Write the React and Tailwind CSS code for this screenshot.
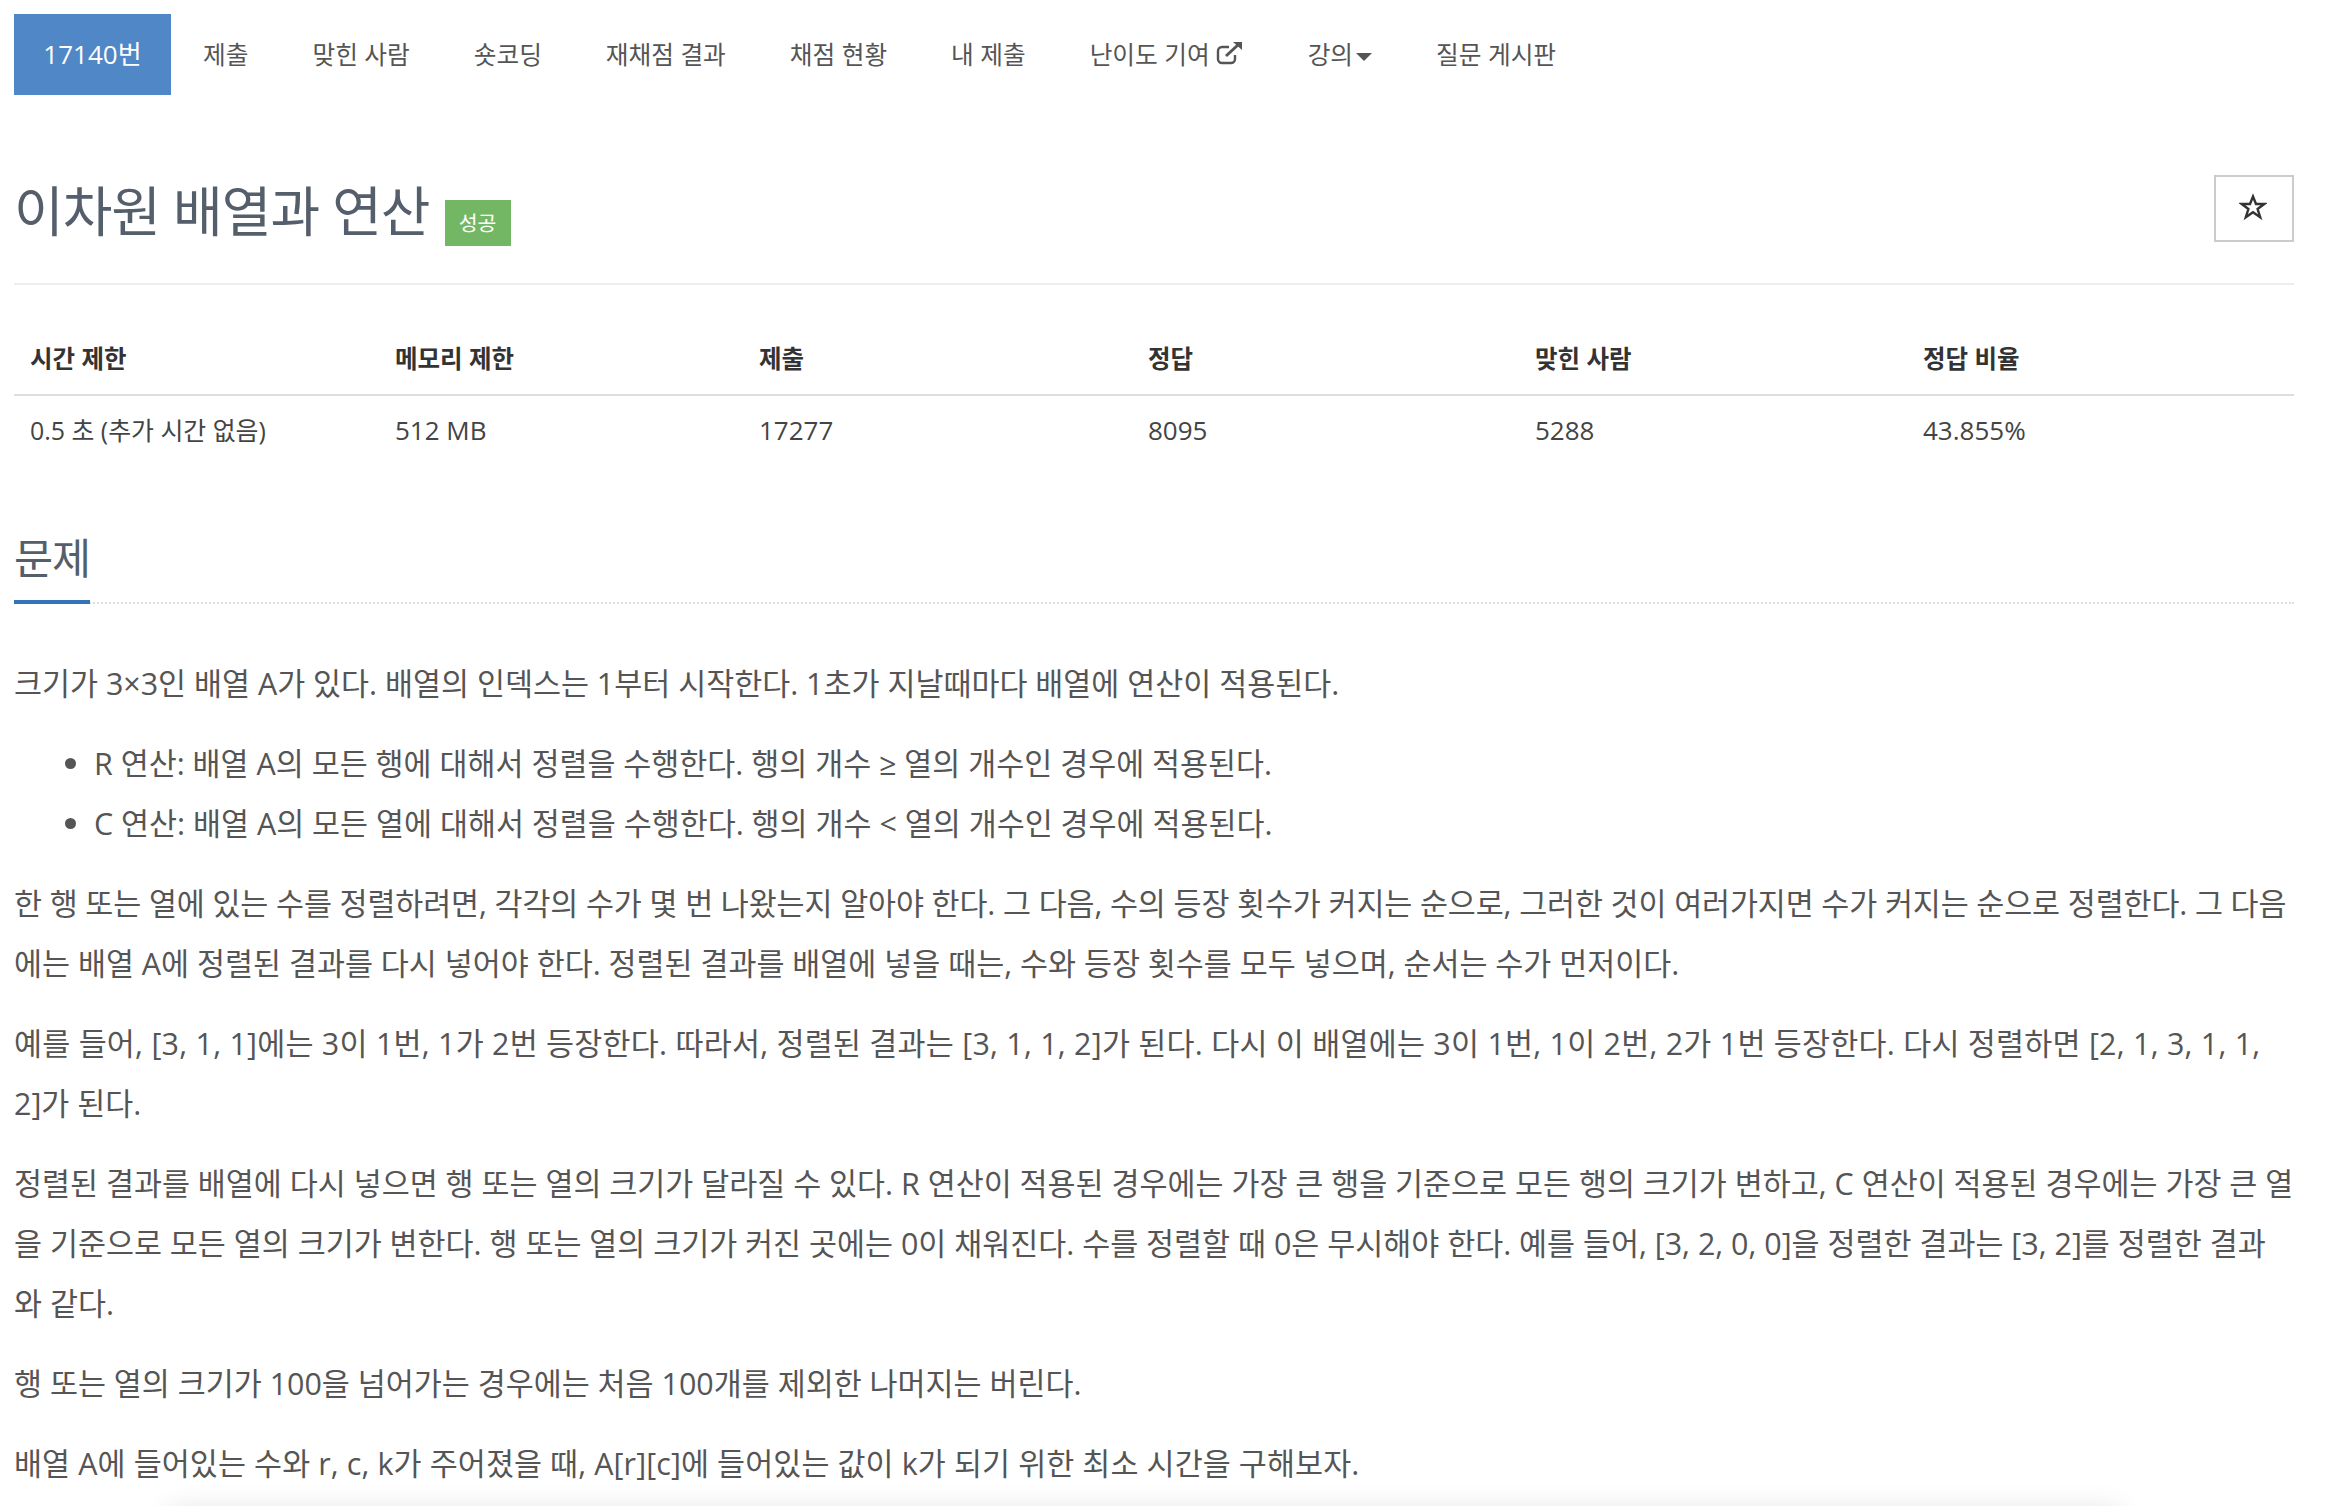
const FONT = "font-['Open_Sans','Noto_Sans_CJK_KR',sans-serif]";

const tabs = ["제출", "맞힌 사람", "숏코딩", "재채점 결과", "채점 현황", "내 제출"];
const stats = [
  ["시간 제한", "0.5 초 (추가 시간 없음)"],
  ["메모리 제한", "512 MB"],
  ["제출", "17277"],
  ["정답", "8095"],
  ["맞힌 사람", "5288"],
  ["정답 비율", "43.855%"],
];
const colWidths = ["w-[365px]", "w-[364px]", "w-[389px]", "w-[387px]", "w-[388px]", "w-[387px]"];

const NavLink = ({ children }) => (
  <a className="flex h-[81px] items-center px-8 text-[24.7px] text-[#555]">
    {children}
  </a>
);

const App = () => {
  return (
    <div className={`relative h-[1506px] overflow-hidden bg-white pl-[14px] pr-[32px] pt-[14px] ${FONT}`}>
      {/* Tabs */}
      <nav className="flex">
        <a className="flex h-[81px] w-[157px] items-center justify-center bg-[#5087c7] text-[26px] text-white">
          17140번
        </a>
        {tabs.map((t) => (
          <NavLink key={t}>{t}</NavLink>
        ))}
        <NavLink>
          난이도 기여
          <svg viewBox="0 0 28 24" className="-mt-[3px] ml-[6px] h-[24px] w-[28px] fill-none stroke-[#555] stroke-[2.4]">
            <path d="M19 14v4a4 4 0 0 1-4 4H6a4 4 0 0 1-4-4V10a4 4 0 0 1 4-4h7" />
            <path d="M10 15 23 3" strokeWidth="3" />
            <path d="M17 1h9v8z" className="fill-[#555] stroke-none" />
          </svg>
        </NavLink>
        <NavLink>
          강의
          <span className="ml-[3px] mt-1 h-0 w-0 border-x-[8px] border-t-[8px] border-x-transparent border-t-[#555]" />
        </NavLink>
        <NavLink>질문 게시판</NavLink>
      </nav>

      {/* Title */}
      <div className="mt-[80px] flex h-[110px] items-start justify-between border-b-2 border-[#eee]">
        <div className="flex items-start">
          <h1 className="text-[54px] leading-[72px] tracking-[-1px] text-[#555e6b]">이차원 배열과 연산</h1>
          <span className="ml-[15px] mt-[25px] flex h-[46px] w-[66px] items-center justify-center bg-[#73b765] text-[20.5px] text-white">
            성공
          </span>
        </div>
        <button className="flex h-[67px] w-[80px] items-center justify-center border-2 border-[#ccc] bg-white">
          <svg viewBox="0 0 28 28" className="-ml-[3px] -mt-[3px] h-[28px] w-[28px] fill-none stroke-[#333] stroke-[2.4]">
            <path d="M14 3.5 17 11h8.2l-6.6 5 2.6 8.2L14 19.2l-7.2 5 2.6-8.2-6.6-5H11z" />
          </svg>
        </button>
      </div>

      {/* Stats */}
      <table className="mt-[48px] w-full table-fixed border-collapse">
        <thead>
          <tr className="border-b-2 border-[#ddd]">
            {stats.map(([label], i) => (
              <th key={label} className={`${colWidths[i]} h-[62px] px-4 pb-2 text-left text-[24.5px] font-bold text-[#333]`}>
                {label}
              </th>
            ))}
          </tr>
        </thead>
        <tbody>
          <tr>
            {stats.map(([label, value], i) => (
              <td key={label} className={`h-[70px] px-4 text-[#444] ${i === 0 ? "text-[24.9px]" : "text-[26px]"}`}>
                {value}
              </td>
            ))}
          </tr>
        </tbody>
      </table>

      {/* Problem */}
      <section className="mt-[65px]">
        <div className="border-b-2 border-dotted border-[#ddd]">
          <h2 className="-mb-[2px] inline-block h-[74px] border-b-4 border-[#3573b8] text-[42.5px] leading-[56px] tracking-[-1px] text-[#555e6b]">
            문제
          </h2>
        </div>
        <div className="mt-[49px] text-[30.45px] leading-[60px] text-[#555]">
          <p>크기가 3×3인 배열 A가 있다. 배열의 인덱스는 1부터 시작한다. 1초가 지날때마다 배열에 연산이 적용된다.</p>
          <ul className="my-5 list-disc pl-[80px] marker:text-[#555]">
            <li>R 연산: 배열 A의 모든 행에 대해서 정렬을 수행한다. 행의 개수 ≥ 열의 개수인 경우에 적용된다.</li>
            <li>C 연산: 배열 A의 모든 열에 대해서 정렬을 수행한다. 행의 개수 &lt; 열의 개수인 경우에 적용된다.</li>
          </ul>
          <p>
            <span className="tracking-[-0.12px]">한 행 또는 열에 있는 수를 정렬하려면, 각각의 수가 몇 번 나왔는지 알아야 한다. 그 다음, 수의 등장 횟수가 커지는 순으로, 그러한 것이 여러가지면 수가 커지는 순으로 정렬한다. 그 다음</span>
            <br />
            에는 배열 A에 정렬된 결과를 다시 넣어야 한다. 정렬된 결과를 배열에 넣을 때는, 수와 등장 횟수를 모두 넣으며, 순서는 수가 먼저이다.
          </p>
          <p className="mt-5">
            <span className="tracking-[0.24px]">예를 들어, [3, 1, 1]에는 3이 1번, 1가 2번 등장한다. 따라서, 정렬된 결과는 [3, 1, 1, 2]가 된다. 다시 이 배열에는 3이 1번, 1이 2번, 2가 1번 등장한다. 다시 정렬하면 [2, 1, 3, 1, 1,</span>
            <br />
            2]가 된다.
          </p>
          <p className="mt-5">
            정렬된 결과를 배열에 다시 넣으면 행 또는 열의 크기가 달라질 수 있다. R 연산이 적용된 경우에는 가장 큰 행을 기준으로 모든 행의 크기가 변하고, C 연산이 적용된 경우에는 가장 큰 열을 기준으로 모든 열의 크기가 변한다. 행 또는 열의 크기가 커진 곳에는 0이 채워진다. 수를 정렬할 때 0은 무시해야 한다. 예를 들어, [3, 2, 0, 0]을 정렬한 결과는 [3, 2]를 정렬한 결과
            <br />
            와 같다.
          </p>
          <p className="mt-5">행 또는 열의 크기가 100을 넘어가는 경우에는 처음 100개를 제외한 나머지는 버린다.</p>
          <p className="mt-5 tracking-[0.1px]">배열 A에 들어있는 수와 r, c, k가 주어졌을 때, A[r][c]에 들어있는 값이 k가 되기 위한 최소 시간을 구해보자.</p>
        </div>
      </section>

      {/* shadow of whatever sits below the fold */}
      <div className="absolute left-[170px] top-[1512px] h-10 w-[1950px] shadow-[0_0_30px_rgba(0,0,0,0.14)]" />
    </div>
  );
};

export default App;
